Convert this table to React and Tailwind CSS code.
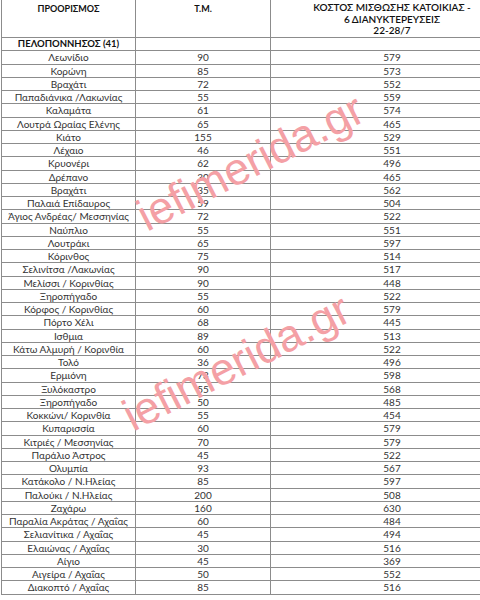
import React from "react";

const rows = [
  ["Λεωνίδιο", "90", "579"],
  ["Κορώνη", "85", "573"],
  ["Βραχάτι", "72", "552"],
  ["Παπαδιάνικα /Λακωνίας", "55", "559"],
  ["Καλαμάτα", "61", "574"],
  ["Λουτρά Ωραίας Ελένης", "65", "465"],
  ["Κιάτο", "155", "529"],
  ["Λέχαιο", "46", "551"],
  ["Κρυονέρι", "62", "496"],
  ["Δρέπανο", "30", "465"],
  ["Βραχάτι", "35", "562"],
  ["Παλαιά Επίδαυρος", "59", "504"],
  ["Άγιος Ανδρέας/ Μεσσηνίας", "72", "522"],
  ["Ναύπλιο", "55", "551"],
  ["Λουτράκι", "65", "597"],
  ["Κόρινθος", "75", "514"],
  ["Σελινίτσα /Λακωνίας", "90", "517"],
  ["Μελίσσι / Κορινθίας", "90", "448"],
  ["Ξηροπήγαδο", "55", "522"],
  ["Κόρφος / Κορινθίας", "60", "579"],
  ["Πόρτο Χέλι", "68", "445"],
  ["Ισθμια", "89", "513"],
  ["Κάτω Αλμυρή / Κορινθία", "60", "522"],
  ["Τολό", "36", "496"],
  ["Ερμιόνη", "73", "598"],
  ["Ξυλόκαστρο", "55", "568"],
  ["Ξηροπήγαδο", "50", "485"],
  ["Κοκκώνι/ Κορινθία", "55", "454"],
  ["Κυπαρισσία", "60", "579"],
  ["Κιτριές / Μεσσηνίας", "70", "579"],
  ["Παράλιο Άστρος", "45", "522"],
  ["Ολυμπία", "93", "567"],
  ["Κατάκολο / Ν.Ηλείας", "85", "597"],
  ["Παλούκι / Ν.Ηλείας", "200", "508"],
  ["Ζαχάρω", "160", "630"],
  ["Παραλία Ακράτας / Αχαΐας", "60", "484"],
  ["Σελιανίτικα / Αχαΐας", "45", "494"],
  ["Ελαιώνας / Αχαΐας", "30", "516"],
  ["Αίγιο", "45", "369"],
  ["Αιγείρα / Αχαΐας", "50", "552"],
  ["Διακοπτό / Αχαΐας", "85", "516"],
];

const Row = ({ a, b, c, bold }) => (
  <div className="flex h-[13.26px] border-b border-[#8c8c8c] leading-[12px]">
    <div
      className={
        "w-[134px] shrink-0 border-r border-[#8c8c8c] text-center " +
        (bold ? "font-bold text-[9.5px] text-[#111]" : "")
      }
    >
      {a}
    </div>
    <div className="w-[135px] shrink-0 border-r border-[#8c8c8c] text-center">{b}</div>
    <div className="w-[242px] shrink-0 text-center">{c}</div>
  </div>
);

// red site watermark laid diagonally over the table (pivot on the baseline start)
const Watermark = ({ top, left }) => (
  <div
    className="absolute whitespace-nowrap text-[45px] leading-none text-[#f4a0a5] -rotate-[27deg] origin-[0_38px]"
    style={{ top, left, fontFamily: '"Liberation Sans", Arial, sans-serif' }}
  >
    iefimerida.gr
  </div>
);

export default function App() {
  return (
    <div
      className="relative w-[480px] h-[600px] overflow-hidden bg-white text-[10px] text-[#333]"
      style={{ fontFamily: 'Lato, "Noto Sans", sans-serif' }}
    >
      <div className="ml-[1px] w-[512px] border-l border-[#8c8c8c]">
        <div className="flex h-[38px] border-b border-[#8c8c8c]">
          <div className="w-[134px] shrink-0 border-r border-[#8c8c8c] pt-[2px] text-center text-[9px] font-bold text-[#111]">
            ΠΡΟΟΡΙΣΜΟΣ
          </div>
          <div className="w-[135px] shrink-0 border-r border-[#8c8c8c] pt-[2px] text-center text-[9px] font-bold text-[#111]">
            Τ.Μ.
          </div>
          <div className="w-[242px] shrink-0 pt-[2px] text-center leading-[11.5px] font-semibold text-[#111]">
            <div>ΚΟΣΤΟΣ ΜΙΣΘΩΣΗΣ ΚΑΤΟΙΚΙΑΣ -</div>
            <div>6 ΔΙΑΝΥΚΤΕΡΕΥΣΕΙΣ</div>
            <div>22-28/7</div>
          </div>
        </div>
        <Row a="ΠΕΛΟΠΟΝΝΗΣΟΣ (41)" b="" c="" bold />
        {rows.map((r, i) => (
          <Row key={i} a={r[0]} b={r[1]} c={r[2]} />
        ))}
      </div>
      <Watermark top="194px" left="147px" />
      <Watermark top="394px" left="133px" />
    </div>
  );
}
